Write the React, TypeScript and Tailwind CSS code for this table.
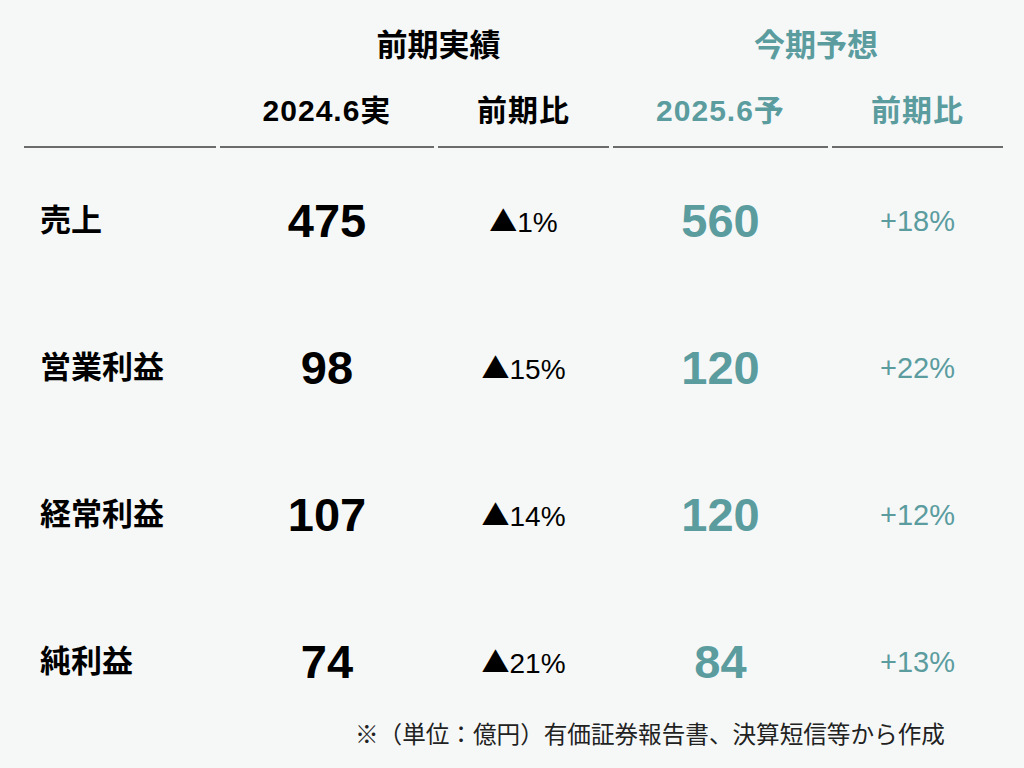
const rows = [
  { label: "売上", actual: "475", yoy: "1%", forecast: "560", growth: "+18%" },
  { label: "営業利益", actual: "98", yoy: "15%", forecast: "120", growth: "+22%" },
  { label: "経常利益", actual: "107", yoy: "14%", forecast: "120", growth: "+12%" },
  { label: "純利益", actual: "74", yoy: "21%", forecast: "84", growth: "+13%" },
];

const cols = "grid grid-cols-[192px_214px_171px_215px_171px] gap-x-1";
const head = "h-full border-b-2 border-[#6b6b6b] text-center text-[30px] font-bold leading-[38px] tracking-[1px]";

export default function App() {
  return (
    <div
      className="w-[1024px] h-[768px] bg-[#f6f8f8] text-black overflow-hidden"
      style={{ fontFamily: '"Liberation Sans", "Noto Sans CJK JP", sans-serif' }}
    >
      <div className="pl-6 pr-[22px]">
        {/* group headers */}
        <div className={`${cols} h-[92px] items-center`}>
          <div />
          <div className="col-span-2 pl-12 text-center text-[31px] font-bold">前期実績</div>
          <div className="col-span-2 pl-4 text-center text-[31px] font-bold text-[#5b9c9f]">今期予想</div>
        </div>

        {/* sub headers */}
        <div className={`${cols} h-[56px] items-start`}>
          <div className="h-full border-b-2 border-[#6b6b6b]" />
          <div className={head}>2024.6実</div>
          <div className={head}>前期比</div>
          <div className={`${head} text-[#5b9c9f]`}>2025.6予</div>
          <div className={`${head} text-[#5b9c9f]`}>前期比</div>
        </div>

        {rows.map((r) => (
          <div key={r.label} className={`${cols} h-[147px] items-center`}>
            <div className="pl-4 text-[31px] font-bold">{r.label}</div>
            <div className="text-center text-[47px] font-bold">{r.actual}</div>
            <div className="text-center text-[28px]">
              <span style={{ fontFamily: '"Noto Sans CJK JP", sans-serif' }}>▲</span>
              {r.yoy}
            </div>
            <div className="text-center text-[47px] font-bold text-[#5b9c9f]">{r.forecast}</div>
            <div className="text-center text-[29px] text-[#5b9c9f]">{r.growth}</div>
          </div>
        ))}

        <div className="-mt-[18px] pl-[331px] text-[23.6px] text-[#222]">
          ※（単位：億円）有価証券報告書、決算短信等から作成
        </div>
      </div>
    </div>
  );
}
